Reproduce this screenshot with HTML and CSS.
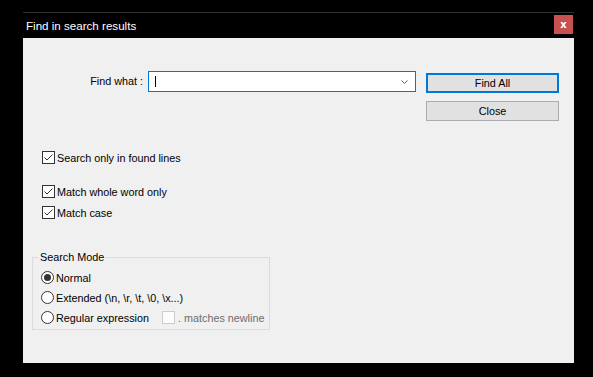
FILE: index.html
```html
<html>
    <head>
        <link rel="stylesheet" href="styles.css">
    </head>
    <body>
        <div class="window">
            <div class="titlebar">
                <span class="title">Find in search results</span>
                <button class="close-x">x</button>
            </div>
            <div class="client">
                <div class="find-row">
                    <label class="find-label">Find what :</label>
                    <div class="combo">
                        <span class="caret"></span>
                        <svg class="chevron" width="7" height="4" viewBox="0 0 7 4">
                            <polyline points="0.5,0.5 3.5,3.5 6.5,0.5" fill="none" stroke="#606060" stroke-width="1"/>
                        </svg>
                    </div>
                    <div class="actions">
                        <button class="btn default">Find All</button>
                        <button class="btn">Close</button>
                    </div>
                </div>
                <div class="options">
                    <label class="check">
                        <svg class="box" width="13" height="13" viewBox="0 0 13 13">
                            <rect x="0.5" y="0.5" width="12" height="12" fill="#fff" stroke="#333"/>
                            <polyline points="2.5,6.5 5,9 10.5,3.5" fill="none" stroke="#333" stroke-width="1"/>
                        </svg>
                        <span>Search only in found lines</span>
                    </label>
                    <label class="check gap-big">
                        <svg class="box" width="13" height="13" viewBox="0 0 13 13">
                            <rect x="0.5" y="0.5" width="12" height="12" fill="#fff" stroke="#333"/>
                            <polyline points="2.5,6.5 5,9 10.5,3.5" fill="none" stroke="#333" stroke-width="1"/>
                        </svg>
                        <span>Match whole word only</span>
                    </label>
                    <label class="check gap-small">
                        <svg class="box" width="13" height="13" viewBox="0 0 13 13">
                            <rect x="0.5" y="0.5" width="12" height="12" fill="#fff" stroke="#333"/>
                            <polyline points="2.5,6.5 5,9 10.5,3.5" fill="none" stroke="#333" stroke-width="1"/>
                        </svg>
                        <span>Match case</span>
                    </label>
                </div>
                <fieldset class="mode">
                    <legend>Search Mode</legend>
                    <label class="radio">
                        <svg width="13" height="13" viewBox="0 0 13 13">
                            <circle cx="6.5" cy="6.5" r="6" fill="#fff" stroke="#333"/>
                            <circle cx="6.5" cy="6.5" r="3.5" fill="#333"/>
                        </svg>
                        <span>Normal</span>
                    </label>
                    <label class="radio">
                        <svg width="13" height="13" viewBox="0 0 13 13">
                            <circle cx="6.5" cy="6.5" r="6" fill="#fff" stroke="#333"/>
                        </svg>
                        <span>Extended (\n, \r, \t, \0, \x...)</span>
                    </label>
                    <div class="radio">
                        <svg width="13" height="13" viewBox="0 0 13 13">
                            <circle cx="6.5" cy="6.5" r="6" fill="#fff" stroke="#333"/>
                        </svg>
                        <span class="regex-label">Regular expression</span>
                        <svg class="box-off" width="13" height="13" viewBox="0 0 13 13">
                            <rect x="0.5" y="0.5" width="12" height="12" fill="#fcfcfc" stroke="#cccccc"/>
                        </svg>
                        <span class="disabled">. matches newline</span>
                    </div>
                </fieldset>
            </div>
        </div>
    </body>
</html>
```

FILE: styles.css
```css
body{
    margin: 0;
    background-color: #000000;
    font-family: "Liberation Sans", Arial, sans-serif;
}
.window{
    margin: 12px 0 0 23px;
    width: 551px;
}
.titlebar{
    border-top: 1px solid #2e2e2e;
    height: 25px;
    display: flex;
    align-items: center;
    justify-content: space-between;
    padding-left: 3px;
    color: white;
    font-size: 11.6px;
}
.close-x{
    align-self: flex-start;
    margin-top: 2px;
    margin-right: 1px;
    width: 19px;
    height: 19px;
    padding: 0;
    border: none;
    background-color: #c75050;
    color: white;
    font-family: "DejaVu Sans", sans-serif;
    font-weight: bold;
    font-size: 10px;
    line-height: 17px;
}
.client{
    background-color: #f0f0f0;
    height: 325px;
    font-size: 10.8px;
    color: #000000;
}
.find-row{
    display: flex;
    align-items: flex-start;
    padding-top: 33px;
}
.find-label{
    width: 120px;
    margin-right: 5px;
    height: 21px;
    line-height: 21px;
    text-align: right;
}
.combo{
    width: 268px;
    height: 21px;
    box-sizing: border-box;
    border: 1px solid #0078d7;
    background-color: white;
    display: flex;
    align-items: center;
}
.caret{
    margin-left: 6px;
    width: 1px;
    height: 11px;
    background-color: #000000;
}
.chevron{
    margin-left: auto;
    margin-right: 7px;
}
.actions{
    margin-left: 10px;
    margin-top: 2px;
    width: 133px;
    display: flex;
    flex-direction: column;
    gap: 8px;
}
.btn{
    height: 20px;
    box-sizing: border-box;
    padding: 0;
    background-color: #e1e1e1;
    border: 1px solid #adadad;
    font-family: inherit;
    font-size: 10.8px;
    color: #000000;
}
.btn.default{
    border: 2px solid #0078d7;
}
.options{
    margin-top: 30px;
    padding-left: 19px;
    display: flex;
    flex-direction: column;
}
.check, .radio{
    display: flex;
    align-items: center;
    height: 13px;
    gap: 2px;
}
.check svg, .radio svg{
    flex: none;
}
.gap-big{
    margin-top: 21px;
}
.gap-small{
    margin-top: 8px;
}
.mode{
    margin: 32px 0 0 9px;
    width: 238px;
    height: 79px;
    box-sizing: border-box;
    padding: 7px 0 0 8px;
    border: 1px solid #dcdcdc;
    display: flex;
    flex-direction: column;
    gap: 7px;
}
.mode legend{
    padding: 0 2px;
    margin-left: -3px;
    line-height: 13px;
}
.regex-label{
    width: 104px;
}
.box-off{
    margin-right: 1px;
}
.disabled{
    color: #6d6d6d;
}
```
